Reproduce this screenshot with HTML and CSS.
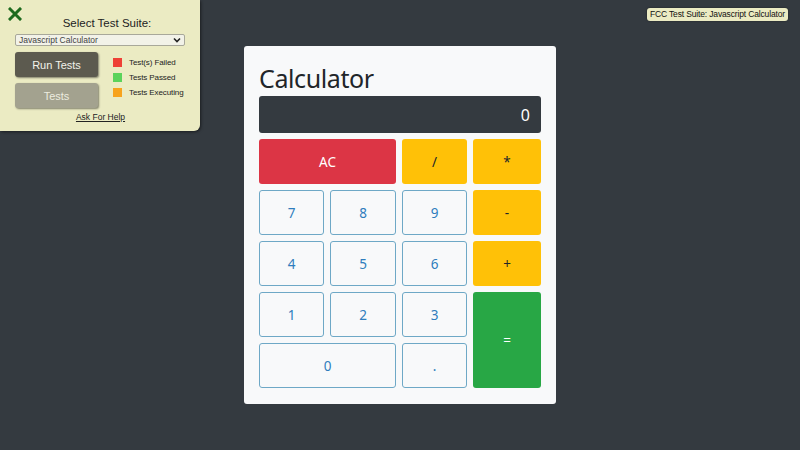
FILE: index.html
```html
<!DOCTYPE html>
<html>
<head>
<meta charset="utf-8">
<link rel="stylesheet" href="styles.css">
</head>
<body>
<div class="fcc-panel">
  <div class="fcc-close">
    <svg width="14" height="14" viewBox="0 0 14 14"><path d="M2 2 L12 12 M12 2 L2 12" stroke="#1e6b1e" stroke-width="3" stroke-linecap="square"/></svg>
  </div>
  <div class="fcc-title">Select Test Suite:</div>
  <div class="fcc-select">
    <span>Javascript Calculator</span>
    <svg width="8" height="6" viewBox="0 0 8 6"><path d="M1 1.5 L4 4.5 L7 1.5" stroke="#222" stroke-width="1.6" fill="none"/></svg>
  </div>
  <div class="fcc-row">
    <div class="fcc-buttons">
      <div class="fcc-btn run">Run Tests</div>
      <div class="fcc-btn tests">Tests</div>
    </div>
    <div class="fcc-legend">
      <div class="leg"><span class="sq red"></span>Test(s) Failed</div>
      <div class="leg"><span class="sq green"></span>Tests Passed</div>
      <div class="leg"><span class="sq orange"></span>Tests Executing</div>
    </div>
  </div>
  <div class="fcc-help">Ask For Help</div>
</div>
<div class="fcc-badge">FCC Test Suite: Javascript Calculator</div>

<main class="stage">
  <div class="calc">
    <h1 class="calc-title">Calculator</h1>
    <div class="display">0</div>
    <div class="keys">
      <div class="key clear wide">AC</div>
      <div class="key op">/</div>
      <div class="key op">*</div>
      <div class="key num">7</div>
      <div class="key num">8</div>
      <div class="key num">9</div>
      <div class="key op">-</div>
      <div class="key num">4</div>
      <div class="key num">5</div>
      <div class="key num">6</div>
      <div class="key op">+</div>
      <div class="key num">1</div>
      <div class="key num">2</div>
      <div class="key num">3</div>
      <div class="key eq">=</div>
      <div class="key num wide">0</div>
      <div class="key num">.</div>
    </div>
  </div>
</main>
</body>
</html>
```

FILE: styles.css
```css
* { box-sizing: border-box; }
html, body { margin: 0; padding: 0; }
body {
  width: 800px;
  height: 450px;
  background: #343a40;
  font-family: "Noto Sans", "Open Sans", sans-serif;
  position: relative;
  overflow: hidden;
}

/* FCC panel */
.fcc-panel {
  position: absolute;
  left: 0;
  top: 0;
  width: 200px;
  height: 131px;
  background: #ebebc3;
  border-bottom-right-radius: 6px;
  box-shadow: 1px 1px 3px rgba(0,0,0,0.5);
  font-family: "Liberation Sans", Arial, sans-serif;
  color: #222;
  padding: 17px 15px 0 15px;
  z-index: 10;
}
.fcc-close {
  position: absolute;
  left: 8px;
  top: 7px;
  width: 14px;
  height: 14px;
  line-height: 0;
}
.fcc-title {
  text-align: center;
  font-size: 11.5px;
  line-height: 13px;
  padding-left: 14px;
}
.fcc-select {
  margin-top: 4px;
  height: 12px;
  border: 1px solid #a8a89a;
  background: #f2f2e8;
  border-radius: 2px;
  font-size: 8.5px;
  color: #444;
  display: flex;
  align-items: center;
  justify-content: space-between;
  padding: 0 3px 0 3px;
}
.fcc-row {
  display: flex;
  margin-top: 6px;
}
.fcc-buttons {
  display: flex;
  flex-direction: column;
  gap: 6px;
  width: 83px;
  flex-shrink: 0;
}
.fcc-btn {
  height: 25px;
  border-radius: 3px;
  display: flex;
  align-items: center;
  justify-content: center;
  font-size: 11px;
  color: #f2f2ea;
  box-shadow: 1px 1px 2px rgba(0,0,0,0.45);
}
.fcc-btn.run { background: #5c5a4f; }
.fcc-btn.tests { background: #a3a28f; color: #ececdf; }
.fcc-legend {
  margin-left: 15px;
  margin-top: 6px;
  display: flex;
  flex-direction: column;
  gap: 6px;
}
.leg {
  display: flex;
  align-items: center;
  font-size: 8px;
  letter-spacing: -0.1px;
  height: 9px;
  white-space: nowrap;
  color: #222;
}
.sq {
  width: 9px;
  height: 9px;
  margin-right: 7px;
  display: inline-block;
}
.sq.red { background: #ee4136; }
.sq.green { background: #5bd35b; }
.sq.orange { background: #f7a31d; }
.fcc-help {
  text-align: center;
  font-size: 8.5px;
  text-decoration: underline;
  margin-top: 4px;
  padding-left: 1px;
  color: #222;
}

.fcc-badge {
  position: absolute;
  right: 12px;
  top: 8px;
  background: #ebebc3;
  border-radius: 3px;
  font-family: "Liberation Sans", Arial, sans-serif;
  font-size: 8.5px;
  letter-spacing: -0.15px;
  line-height: 13px;
  padding: 0 3px;
  color: #111;
  box-shadow: 0 0 2px rgba(0,0,0,0.5);
}

/* Calculator */
.stage {
  display: flex;
  justify-content: center;
  padding-top: 46px;
}
.calc {
  width: 312px;
  height: 358px;
  background: #f8f9fa;
  border-radius: 3px;
  padding: 15px 15px 16px 15px;
}
.calc-title {
  margin: 0 0 1px 0;
  font-weight: 400;
  font-size: 25px;
  line-height: 34px;
  color: #212529;
  letter-spacing: -0.4px;
}
.display {
  height: 37px;
  background: #343a40;
  border-radius: 3px;
  color: #fff;
  font-size: 16px;
  display: flex;
  align-items: center;
  justify-content: flex-end;
  padding-right: 11px;
}
.keys {
  margin-top: 6px;
  display: grid;
  grid-template-columns: 65px 66px 65px 68px;
  grid-auto-rows: 45px;
  column-gap: 6px;
  row-gap: 6px;
}
.key {
  border-radius: 3px;
  display: flex;
  align-items: center;
  justify-content: center;
  font-size: 13.5px;
}
.key.wide { grid-column: span 2; }
.key.clear { background: #dc3545; color: #fff; }
.key.op { background: #ffc107; color: #212529; }
.key.eq { background: #28a745; color: #fff; grid-row: span 2; }
.key.num {
  border: 1px solid #6ea8c6;
  color: #2f7dbd;
  background: #f8f9fa;
}
```
